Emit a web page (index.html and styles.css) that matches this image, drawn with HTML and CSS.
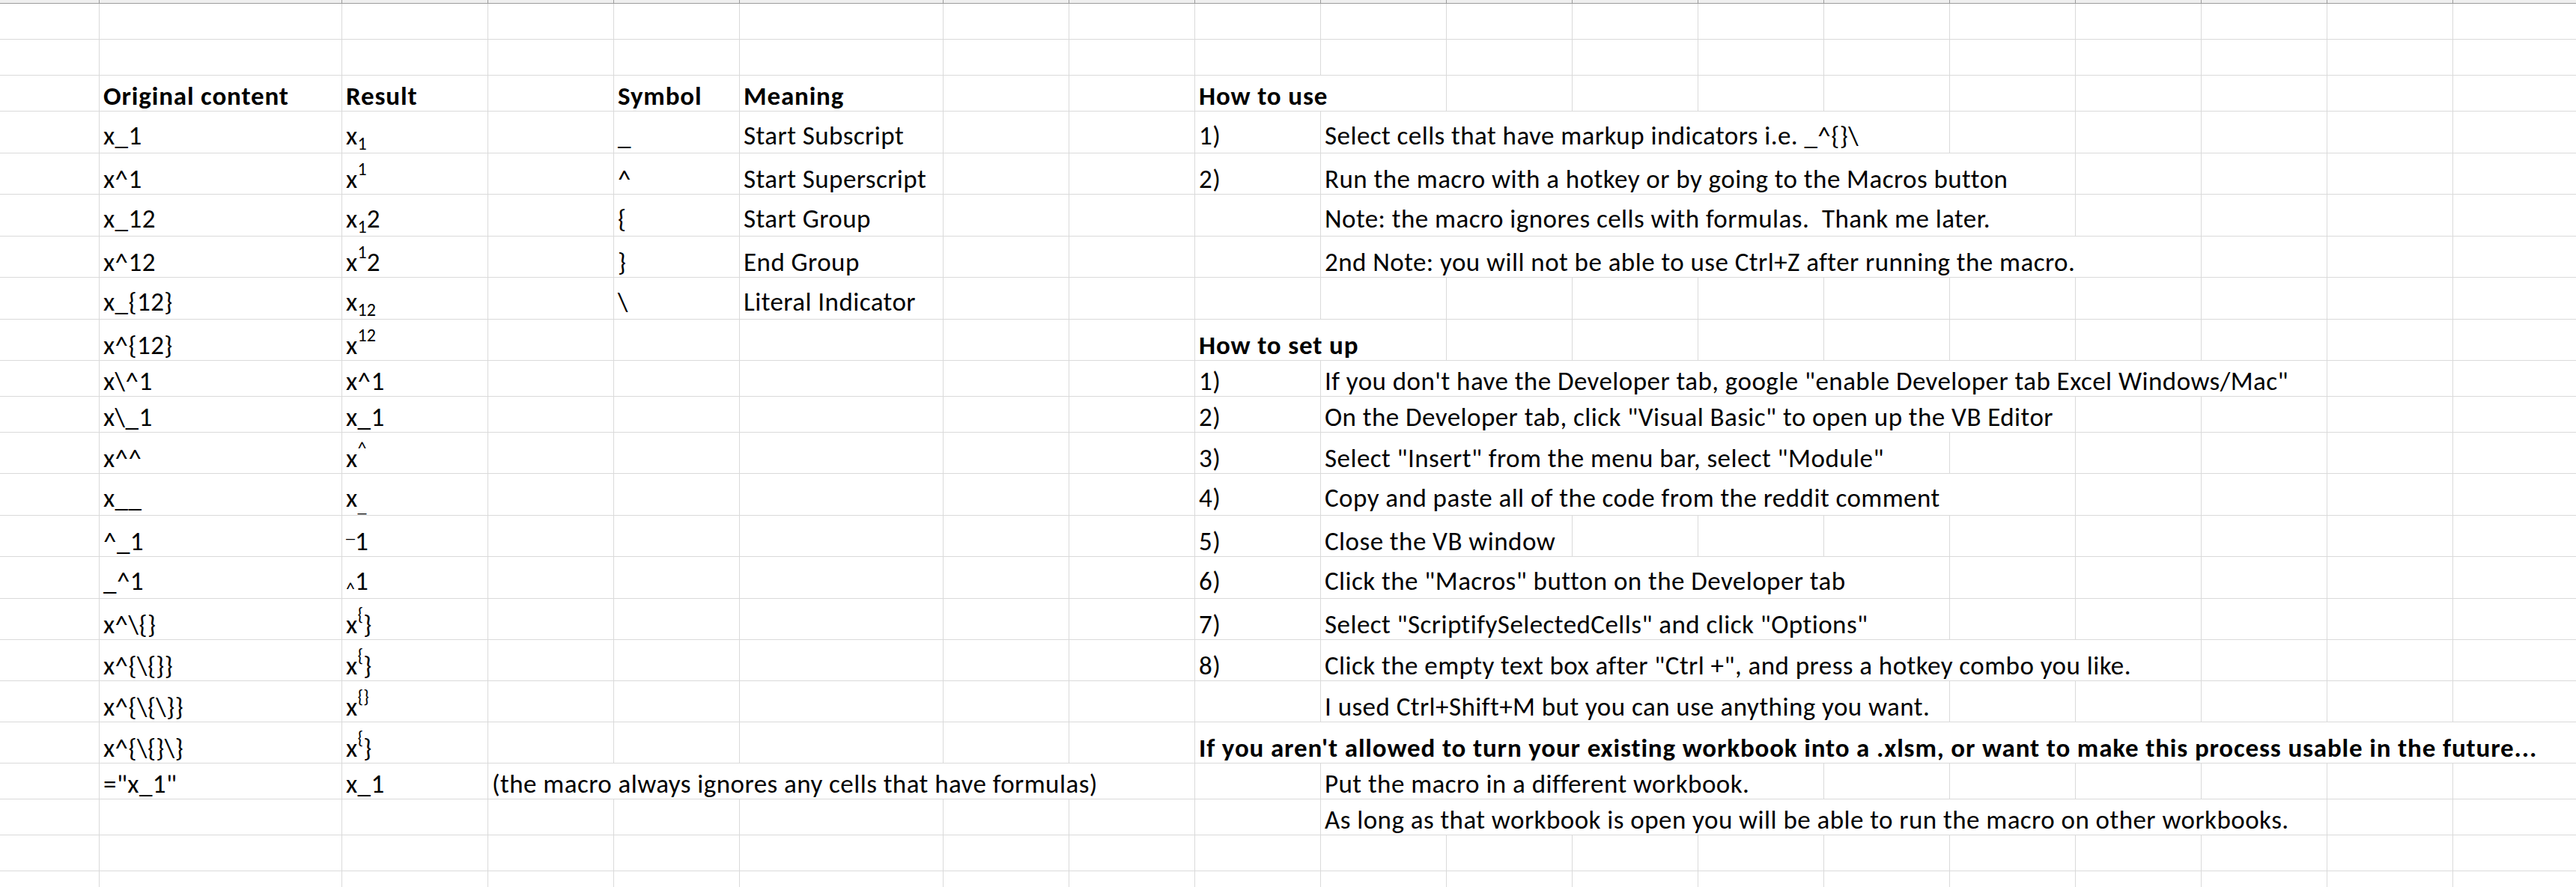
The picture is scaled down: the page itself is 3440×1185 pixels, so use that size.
FILE: index.html
```html
<!DOCTYPE html>
<html lang="en">
<head>
<meta charset="utf-8">
<title>Scriptify macro notes</title>
<link rel="stylesheet" href="styles.css">
</head>
<body>
<div class="sheet">
  <div class="row hdr"><div class="hc"></div><div class="hc"></div><div class="hc"></div><div class="hc"></div><div class="hc"></div><div class="hc"></div><div class="hc"></div><div class="hc"></div><div class="hc"></div><div class="hc"></div><div class="hc"></div><div class="hc"></div><div class="hc"></div><div class="hc"></div><div class="hc"></div><div class="hc"></div><div class="hc"></div><div class="hc"></div><div class="hc"></div></div>

  <div class="row h48"><div class="c"></div><div class="c"></div><div class="c"></div><div class="c"></div><div class="c"></div><div class="c"></div><div class="c"></div><div class="c"></div><div class="c"></div><div class="c"></div><div class="c"></div><div class="c"></div><div class="c"></div><div class="c"></div><div class="c"></div><div class="c"></div><div class="c"></div><div class="c"></div><div class="c"></div></div>

  <div class="row h48"><div class="c"></div><div class="c"></div><div class="c"></div><div class="c"></div><div class="c"></div><div class="c"></div><div class="c"></div><div class="c"></div><div class="c"></div><div class="c"></div><div class="c"></div><div class="c"></div><div class="c"></div><div class="c"></div><div class="c"></div><div class="c"></div><div class="c"></div><div class="c"></div><div class="c"></div></div>

  <div class="row h48">
    <div class="c"></div><div class="c b">Original content</div><div class="c b">Result</div><div class="c"></div><div class="c b">Symbol</div><div class="c b">Meaning</div><div class="c"></div><div class="c"></div>
    <div class="c b s2">How to use</div>
    <div class="c"></div><div class="c"></div><div class="c"></div><div class="c"></div><div class="c"></div><div class="c"></div><div class="c"></div><div class="c"></div><div class="c"></div>
  </div>

  <div class="row h56 lo">
    <div class="c"></div><div class="c">x_1</div><div class="c"><span>x<sub>1</sub></span></div><div class="c"></div><div class="c">_</div><div class="c">Start Subscript</div><div class="c"></div><div class="c"></div>
    <div class="c">1)</div><div class="c s5">Select cells that have markup indicators i.e. _^{}\</div>
    <div class="c"></div><div class="c"></div><div class="c"></div><div class="c"></div><div class="c"></div>
  </div>

  <div class="row h55">
    <div class="c"></div><div class="c">x^1</div><div class="c"><span>x<sup>1</sup></span></div><div class="c"></div><div class="c">^</div><div class="c">Start Superscript</div><div class="c"></div><div class="c"></div>
    <div class="c">2)</div><div class="c s6">Run the macro with a hotkey or by going to the Macros button</div>
    <div class="c"></div><div class="c"></div><div class="c"></div><div class="c"></div>
  </div>

  <div class="row h56 lo">
    <div class="c"></div><div class="c">x_12</div><div class="c"><span>x<sub>1</sub>2</span></div><div class="c"></div><div class="c">{</div><div class="c">Start Group</div><div class="c"></div><div class="c"></div>
    <div class="c"></div><div class="c s6">Note: the macro ignores cells with formulas.&nbsp; Thank me later.</div>
    <div class="c"></div><div class="c"></div><div class="c"></div><div class="c"></div>
  </div>

  <div class="row h55">
    <div class="c"></div><div class="c">x^12</div><div class="c"><span>x<sup>1</sup>2</span></div><div class="c"></div><div class="c">}</div><div class="c">End Group</div><div class="c"></div><div class="c"></div>
    <div class="c"></div><div class="c s7">2nd Note: you will not be able to use Ctrl+Z after running the macro.</div>
    <div class="c"></div><div class="c"></div><div class="c"></div>
  </div>

  <div class="row h56 lo">
    <div class="c"></div><div class="c">x_{12}</div><div class="c"><span>x<sub>12</sub></span></div><div class="c"></div><div class="c">\</div><div class="c">Literal Indicator</div><div class="c"></div><div class="c"></div>
    <div class="c"></div><div class="c"></div><div class="c"></div><div class="c"></div><div class="c"></div><div class="c"></div><div class="c"></div><div class="c"></div><div class="c"></div><div class="c"></div><div class="c"></div>
  </div>

  <div class="row h55">
    <div class="c"></div><div class="c">x^{12}</div><div class="c"><span>x<sup>12</sup></span></div><div class="c"></div><div class="c"></div><div class="c"></div><div class="c"></div><div class="c"></div>
    <div class="c b s2">How to set up</div>
    <div class="c"></div><div class="c"></div><div class="c"></div><div class="c"></div><div class="c"></div><div class="c"></div><div class="c"></div><div class="c"></div><div class="c"></div>
  </div>

  <div class="row h48">
    <div class="c"></div><div class="c">x\^1</div><div class="c">x^1</div><div class="c"></div><div class="c"></div><div class="c"></div><div class="c"></div><div class="c"></div>
    <div class="c">1)</div><div class="c s8">If you don't have the Developer tab, google "enable Developer tab Excel Windows/Mac"</div>
    <div class="c"></div><div class="c"></div>
  </div>

  <div class="row h48">
    <div class="c"></div><div class="c">x\_1</div><div class="c">x_1</div><div class="c"></div><div class="c"></div><div class="c"></div><div class="c"></div><div class="c"></div>
    <div class="c">2)</div><div class="c s6">On the Developer tab, click "Visual Basic" to open up the VB Editor</div>
    <div class="c"></div><div class="c"></div><div class="c"></div><div class="c"></div>
  </div>

  <div class="row h55">
    <div class="c"></div><div class="c">x^^</div><div class="c"><span>x<sup>^</sup></span></div><div class="c"></div><div class="c"></div><div class="c"></div><div class="c"></div><div class="c"></div>
    <div class="c">3)</div><div class="c s5">Select "Insert" from the menu bar, select "Module"</div>
    <div class="c"></div><div class="c"></div><div class="c"></div><div class="c"></div><div class="c"></div>
  </div>

  <div class="row h56 lo">
    <div class="c"></div><div class="c">x__</div><div class="c"><span>x<sub>_</sub></span></div><div class="c"></div><div class="c"></div><div class="c"></div><div class="c"></div><div class="c"></div>
    <div class="c">4)</div><div class="c s6">Copy and paste all of the code from the reddit comment</div>
    <div class="c"></div><div class="c"></div><div class="c"></div><div class="c"></div>
  </div>

  <div class="row h55">
    <div class="c"></div><div class="c">^_1</div><div class="c"><span><sup>_</sup>1</span></div><div class="c"></div><div class="c"></div><div class="c"></div><div class="c"></div><div class="c"></div>
    <div class="c">5)</div><div class="c s2">Close the VB window</div>
    <div class="c"></div><div class="c"></div><div class="c"></div><div class="c"></div><div class="c"></div><div class="c"></div><div class="c"></div><div class="c"></div>
  </div>

  <div class="row h56 lo">
    <div class="c"></div><div class="c">_^1</div><div class="c"><span><sub>^</sub>1</span></div><div class="c"></div><div class="c"></div><div class="c"></div><div class="c"></div><div class="c"></div>
    <div class="c">6)</div><div class="c s5">Click the "Macros" button on the Developer tab</div>
    <div class="c"></div><div class="c"></div><div class="c"></div><div class="c"></div><div class="c"></div>
  </div>

  <div class="row h55">
    <div class="c"></div><div class="c">x^\{}</div><div class="c"><span>x<sup>{</sup>}</span></div><div class="c"></div><div class="c"></div><div class="c"></div><div class="c"></div><div class="c"></div>
    <div class="c">7)</div><div class="c s5">Select "ScriptifySelectedCells" and click "Options"</div>
    <div class="c"></div><div class="c"></div><div class="c"></div><div class="c"></div><div class="c"></div>
  </div>

  <div class="row h55">
    <div class="c"></div><div class="c">x^{\{}}</div><div class="c"><span>x<sup>{</sup>}</span></div><div class="c"></div><div class="c"></div><div class="c"></div><div class="c"></div><div class="c"></div>
    <div class="c">8)</div><div class="c s7">Click the empty text box after "Ctrl +", and press a hotkey combo you like.</div>
    <div class="c"></div><div class="c"></div><div class="c"></div>
  </div>

  <div class="row h55">
    <div class="c"></div><div class="c">x^{\{\}}</div><div class="c"><span>x<sup>{}</sup></span></div><div class="c"></div><div class="c"></div><div class="c"></div><div class="c"></div><div class="c"></div>
    <div class="c"></div><div class="c s5">I used Ctrl+Shift+M but you can use anything you want.</div>
    <div class="c"></div><div class="c"></div><div class="c"></div><div class="c"></div><div class="c"></div>
  </div>

  <div class="row h55">
    <div class="c"></div><div class="c">x^{\{}\}</div><div class="c"><span>x<sup>{</sup>}</span></div><div class="c"></div><div class="c"></div><div class="c"></div><div class="c"></div><div class="c"></div>
    <div class="c b s11">If you aren't allowed to turn your existing workbook into a .xlsm, or want to make this process usable in the future...</div>
  </div>

  <div class="row h48">
    <div class="c"></div><div class="c">="x_1"</div><div class="c">x_1</div><div class="c s5">(the macro always ignores any cells that have formulas)</div>
    <div class="c"></div><div class="c s4">Put the macro in a different workbook.</div>
    <div class="c"></div><div class="c"></div><div class="c"></div><div class="c"></div><div class="c"></div><div class="c"></div>
  </div>

  <div class="row h48">
    <div class="c"></div><div class="c"></div><div class="c"></div><div class="c"></div><div class="c"></div><div class="c"></div><div class="c"></div><div class="c"></div>
    <div class="c"></div><div class="c s8">As long as that workbook is open you will be able to run the macro on other workbooks.</div>
    <div class="c"></div><div class="c"></div>
  </div>

  <div class="row h48"><div class="c"></div><div class="c"></div><div class="c"></div><div class="c"></div><div class="c"></div><div class="c"></div><div class="c"></div><div class="c"></div><div class="c"></div><div class="c"></div><div class="c"></div><div class="c"></div><div class="c"></div><div class="c"></div><div class="c"></div><div class="c"></div><div class="c"></div><div class="c"></div><div class="c"></div></div>

  <div class="row h48"><div class="c"></div><div class="c"></div><div class="c"></div><div class="c"></div><div class="c"></div><div class="c"></div><div class="c"></div><div class="c"></div><div class="c"></div><div class="c"></div><div class="c"></div><div class="c"></div><div class="c"></div><div class="c"></div><div class="c"></div><div class="c"></div><div class="c"></div><div class="c"></div><div class="c"></div></div>
</div>
</body>
</html>
```

FILE: styles.css
```css
html, body {
  margin: 0;
  padding: 0;
  background: #ffffff;
  overflow: hidden;
}

.sheet {
  display: flex;
  flex-direction: column;
  width: 3444px;
  font-family: Carlito, Calibri, "Liberation Sans Narrow", "Open Sans", sans-serif;
  font-size: 35px;
  color: #000000;
}

.row {
  display: grid;
  grid-template-columns: 133px 324px 195px 168px 168px 272px 168px 168px repeat(11, 168px);
}

.hdr {
  height: 5px;
  background: #efefef;
  border-bottom: 1px solid #9c9c9c;
  box-sizing: border-box;
}

.hc {
  border-right: 1px solid #9c9c9c;
  box-sizing: border-box;
}

.h48 { height: 48px; }
.h55 { height: 55px; }
.h56 { height: 56px; }

.c {
  box-sizing: border-box;
  border-right: 1px solid #dadada;
  border-bottom: 1px solid #dadada;
  padding: 0 5px 2px 5px;
  display: flex;
  align-items: flex-end;
  white-space: nowrap;
  line-height: 35px;
  min-width: 0;
  letter-spacing: 0.45px;
}

.lo .c { padding-bottom: 5px; }

.b {
  font-weight: 700;
  letter-spacing: 0.85px;
}

.s2 { grid-column: span 2; }
.s4 { grid-column: span 4; }
.s5 { grid-column: span 5; }
.s6 { grid-column: span 6; }
.s7 { grid-column: span 7; }
.s8 { grid-column: span 8; }
.s11 { grid-column: span 11; }

.c sup,
.c sub {
  font-size: 24px;
  line-height: 0;
  letter-spacing: 0;
}

.c sup { vertical-align: 17px; }
.c sub { vertical-align: -7px; }
```
